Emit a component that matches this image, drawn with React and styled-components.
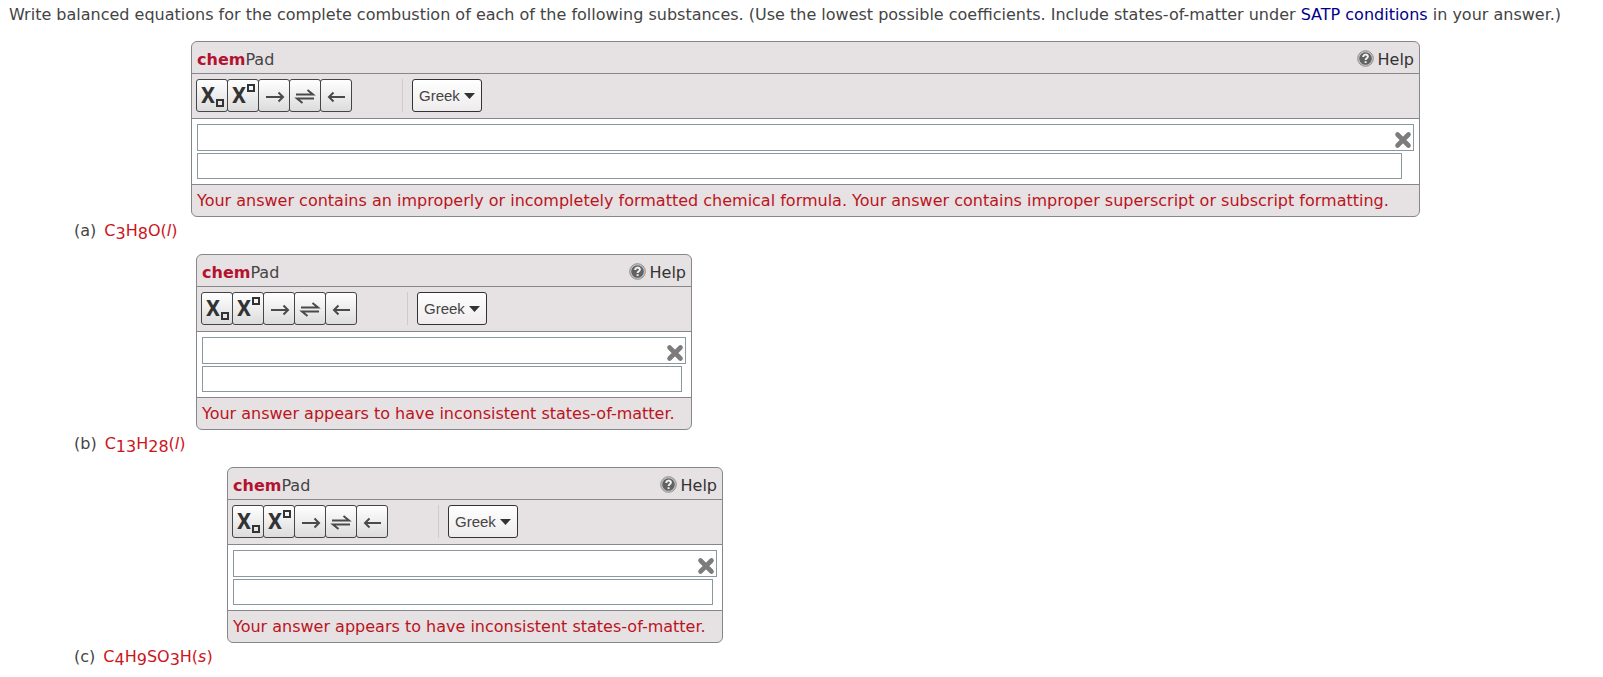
import React from "react";
import styled, { createGlobalStyle } from "styled-components";

const palette = {
    text: "#444444",
    red: "#bb141d",
    brand: "#b3132f",
    formula: "#cc141c",
    link: "#000088",
    border: "#85878a",
    input: "#8b999e",
    panel: "#e6e1e3",
};

const GlobalStyle = createGlobalStyle`
    * {
        box-sizing: border-box;
    }
    body {
        margin: 0;
        background: #ffffff;
        color: ${palette.text};
        font-family: "DejaVu Sans", Verdana, sans-serif;
        font-size: 16px;
        line-height: 24px;
    }
`;

const Page = styled.main`
    padding: 3px 9px 0;
`;

const Prompt = styled.p`
    margin: 0;

    a {
        color: ${palette.link};
        text-decoration: none;
    }
`;

const Questions = styled.div`
    display: flex;
    flex-direction: column;
    gap: 12px;
    padding: 14px 0 0 65px;
`;

const Question = styled.div`
    display: grid;
    grid-template-columns: ${({ $indent }) => $indent}px max-content;
`;

const Label = styled.div`
    display: flex;
    align-items: baseline;
    gap: 8px;
    grid-column: 1;
    grid-row: 2;
    height: 25px;
    line-height: 28px;
    white-space: nowrap;
`;

const Formula = styled.span`
    color: ${palette.formula};

    sub {
        font-size: 16px;
        line-height: 0;
        vertical-align: -3px;
    }
`;

const Pad = styled.section`
    grid-column: 2;
    grid-row: 1;
    min-width: ${({ $wide }) => ($wide ? 1229 : 496)}px;
    border: 1px solid ${palette.border};
    border-radius: 6px;
    background: ${palette.panel};
    overflow: hidden;
`;

const PadHeader = styled.header`
    display: flex;
    align-items: center;
    justify-content: space-between;
    height: 32px;
    padding: 4px 5px 0;
    border-bottom: 1px solid ${palette.border};

    b {
        color: ${palette.brand};
    }
`;

const HelpLink = styled.a`
    display: flex;
    align-items: center;
    gap: 4px;
    color: #333333;
    text-decoration: none;

    svg {
        margin-bottom: 3px;
    }
`;

const Toolbar = styled.div`
    display: flex;
    align-items: flex-start;
    height: 45px;
    padding: 5px 4px 0;
    border-bottom: 1px solid ${palette.border};
`;

const ToolButton = styled.button`
    width: 32px;
    height: 33px;
    padding: 0;
    border: 1px solid #454545;
    border-radius: 3px;
    background: linear-gradient(#ffffff, #dcdcdc);

    & + & {
        margin-left: -1px;
    }
    svg {
        display: block;
    }
    text {
        fill: #333333;
        font-family: Roboto, "Liberation Sans", sans-serif;
        font-size: 22px;
        font-weight: 700;
    }
`;

const Separator = styled.div`
    width: 1px;
    height: 33px;
    margin: 0 9px 0 50px;
    background: #cfcbcc;
`;

const GreekBlock = styled.label`
    position: relative;

    select {
        display: block;
        appearance: none;
        width: 70px;
        height: 33px;
        padding: 0 0 1px 6px;
        border: 1px solid #333333;
        border-radius: 3px;
        background: linear-gradient(#ffffff, #eeebec);
        color: #444444;
        font-family: "Liberation Sans", Arial, sans-serif;
        font-size: 15px;
    }
    svg {
        position: absolute;
        top: 14px;
        right: 7px;
        pointer-events: none;
    }
`;

const Entry = styled.div`
    display: flex;
    flex-direction: column;
    gap: 2px;
    padding: 5px;
    border-bottom: 1px solid ${palette.border};
    background: #ffffff;
`;

const PreviewRow = styled.div`
    position: relative;
    display: flex;
`;

const TextBox = styled.input`
    min-width: 0;
    flex: 1;
    height: ${({ $tall }) => ($tall ? 27 : 26)}px;
    padding: 0 4px;
    border: 1px solid ${palette.input};
    font: inherit;
    outline: none;
`;

const SourceRow = styled.div`
    display: flex;
    padding-right: ${({ $inset }) => $inset}px;
`;

const ClearButton = styled.button`
    position: absolute;
    right: 2px;
    bottom: 2px;
    width: 18px;
    height: 18px;
    padding: 0;
    border: 0;
    background: none;

    svg {
        display: block;
    }
`;

const Message = styled.div`
    height: 31px;
    padding: 0 5px;
    color: ${palette.red};
    line-height: 31px;
    white-space: nowrap;
`;

const SubscriptIcon = () => (
    <svg width="30" height="31" viewBox="0 0 30 31" fill="none">
        <text x="4" y="23">X</text>
        <path d="M20 20h6v6h-6z" stroke="#333333" strokeWidth="2" />
    </svg>
);

const SuperscriptIcon = () => (
    <svg width="30" height="31" viewBox="0 0 30 31" fill="none">
        <text x="4" y="23">X</text>
        <path d="M20 5h6v6h-6z" stroke="#333333" strokeWidth="2" />
    </svg>
);

const RightArrowIcon = () => (
    <svg width="30" height="31" viewBox="0 0 30 31" fill="none" stroke="#4a4a4a" strokeWidth="2">
        <path d="M7 17h17M19.5 12.5 24 17l-4.5 4.5" />
    </svg>
);

const EquilibriumIcon = () => (
    <svg width="30" height="31" viewBox="0 0 30 31" fill="none" stroke="#4a4a4a" strokeWidth="2">
        <path d="M6 14.5h17L17.5 10M24 18.5H7l5.5 4.5" />
    </svg>
);

const LeftArrowIcon = () => (
    <svg width="30" height="31" viewBox="0 0 30 31" fill="none" stroke="#4a4a4a" strokeWidth="2">
        <path d="M24 17H8M12.5 12.5 8 17l4.5 4.5" />
    </svg>
);

const HelpIcon = () => (
    <svg width="17" height="17" viewBox="0 0 17 17" fill="none">
        <circle cx="8.5" cy="8.5" r="7.8" fill="#c8c8c8" stroke="#8c8c8c" />
        <circle cx="8.5" cy="8.5" r="6.3" fill="#626262" />
        <path d="M6.2 7c0-3.2 4.7-3 4.7-.4 0 1.8-2.3 1.6-2.3 3.4M8.6 11.2v1.8" stroke="#f2f2f2" strokeWidth="2" />
    </svg>
);

const ClearIcon = () => (
    <svg width="18" height="18" viewBox="0 0 18 18" stroke="#7c7c7c" strokeWidth="4.6" strokeLinecap="round">
        <path d="M3.5 3.5 14.5 14.5M14.5 3.5 3.5 14.5" />
    </svg>
);

const tools = [
    { name: "Subscript", Icon: SubscriptIcon },
    { name: "Superscript", Icon: SuperscriptIcon },
    { name: "Right arrow", Icon: RightArrowIcon },
    { name: "Equilibrium arrow", Icon: EquilibriumIcon },
    { name: "Left arrow", Icon: LeftArrowIcon },
];

const questions = [
    {
        id: "a",
        formula: <>C<sub>3</sub>H<sub>8</sub>O(<i>l</i>)</>,
        message:
            "Your answer contains an improperly or incompletely formatted chemical formula. Your answer contains improper superscript or subscript formatting.",
        wide: true,
        indent: 117,
        inset: 12,
    },
    {
        id: "b",
        formula: <>C<sub>13</sub>H<sub>28</sub>(<i>l</i>)</>,
        message: "Your answer appears to have inconsistent states-of-matter.",
        indent: 122,
        inset: 4,
    },
    {
        id: "c",
        formula: <>C<sub>4</sub>H<sub>9</sub>SO<sub>3</sub>H(<i>s</i>)</>,
        message: "Your answer appears to have inconsistent states-of-matter.",
        indent: 153,
        inset: 4,
    },
];

const ChemPad = ({ id, message, wide, inset }) => {
    return (
        <Pad $wide={wide}>
            <PadHeader>
                <span>
                    <b>chem</b>Pad
                </span>
                <HelpLink href="#help">
                    <HelpIcon />
                    Help
                </HelpLink>
            </PadHeader>
            <Toolbar>
                {tools.map(({ name, Icon }) => (
                    <ToolButton key={name} type="button" aria-label={name}>
                        <Icon />
                    </ToolButton>
                ))}
                <Separator />
                <GreekBlock>
                    <select aria-label="Greek letters">
                        <option>Greek</option>
                    </select>
                    <svg width="11" height="6" viewBox="0 0 11 6">
                        <path d="M0 0h11L5.5 6z" fill="#333333" />
                    </svg>
                </GreekBlock>
            </Toolbar>
            <Entry>
                <PreviewRow>
                    <TextBox $tall aria-label={`Answer ${id}`} />
                    <ClearButton type="button" aria-label="Clear">
                        <ClearIcon />
                    </ClearButton>
                </PreviewRow>
                <SourceRow $inset={inset}>
                    <TextBox aria-label={`Answer ${id} source`} />
                </SourceRow>
            </Entry>
            <Message>{message}</Message>
        </Pad>
    );
}

const App = () => {
    return (
        <Page>
            <GlobalStyle />
            <Prompt>
                Write balanced equations for the complete combustion of each of the following substances. (Use the
                lowest possible coefficients. Include states-of-matter under{" "}
                <a href="#satp">SATP conditions</a> in your answer.)
            </Prompt>
            <Questions>
                {questions.map(({ id, formula, message, wide, indent, inset }) => (
                    <Question key={id} $indent={indent}>
                        <Label>
                            <span>({id})</span>
                            <Formula>{formula}</Formula>
                        </Label>
                        <ChemPad id={id} message={message} wide={wide} inset={inset} />
                    </Question>
                ))}
            </Questions>
        </Page>
    );
}

export default App;
